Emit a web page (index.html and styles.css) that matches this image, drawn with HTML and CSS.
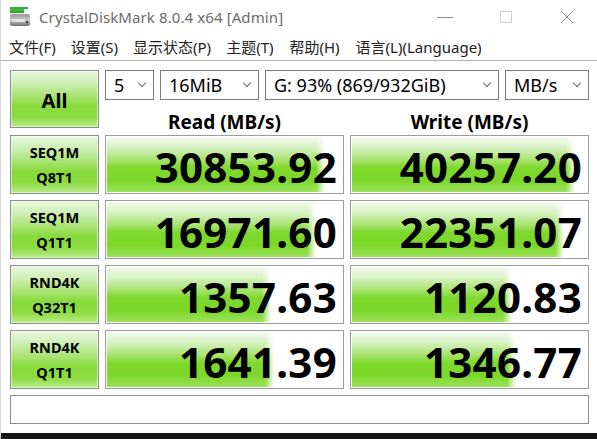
FILE: index.html
```html
<!DOCTYPE HTML>
<html>

<head>
  <title>CrystalDiskMark 8.0.4 x64 [Admin]</title>
  <meta name="viewport" content="width=device-width, initial-scale=1">
  <link rel="stylesheet" href="styles.css">
</head>

<body>
  <div class="window">
    <header class="titlebar">
      <svg class="app-icon" width="22" height="22" viewBox="0 0 22 22">
        <defs>
          <linearGradient id="ig" x1="0" y1="0" x2="0" y2="1">
            <stop offset="0" stop-color="#6fd84a" />
            <stop offset="1" stop-color="#1f9a2a" />
          </linearGradient>
          <linearGradient id="db" x1="0" y1="0" x2="0" y2="1">
            <stop offset="0" stop-color="#9a9a9a" />
            <stop offset="0.5" stop-color="#c9c9c9" />
            <stop offset="1" stop-color="#6c6c6c" />
          </linearGradient>
        </defs>
        <rect x="1" y="0" width="14" height="6" fill="url(#ig)" />
        <rect x="1" y="0" width="18" height="2" fill="#2fb23a" />
        <rect x="1" y="7" width="20" height="12" rx="2" fill="url(#db)" />
        <rect x="3" y="12" width="13" height="3" fill="#e2e2e2" />
        <rect x="17" y="14" width="2" height="2" fill="#3d3d3d" />
      </svg>
      <span class="title">CrystalDiskMark 8.0.4 x64 [Admin]</span>
      <div class="controls">
        <span class="ctl"><svg width="18" height="10" viewBox="0 0 18 10"><line x1="1" y1="5.5" x2="17" y2="5.5" stroke="#8a8a8a" stroke-width="1" /></svg></span>
        <span class="ctl"><svg width="14" height="14" viewBox="0 0 14 14"><rect x="1.5" y="1.5" width="11" height="11" fill="none" stroke="#d2d2d2" stroke-width="1" /></svg></span>
        <span class="ctl"><svg width="14" height="14" viewBox="0 0 14 14"><path d="M1 1 L13 13 M13 1 L1 13" stroke="#8a8a8a" stroke-width="1" /></svg></span>
      </div>
    </header>

    <nav class="menubar">
      <span>文件(F)</span>
      <span>设置(S)</span>
      <span>显示状态(P)</span>
      <span>主题(T)</span>
      <span>帮助(H)</span>
      <span>语言(L)(Language)</span>
    </nav>

    <main class="panel">
      <div class="grid">
        <div class="btn all">All</div>

        <div class="selects">
          <div class="select s-count">5<i class="chev"></i></div>
          <div class="select s-size">16MiB<i class="chev"></i></div>
          <div class="select s-drive">G: 93% (869/932GiB)<i class="chev"></i></div>
          <div class="select s-unit">MB/s<i class="chev"></i></div>
        </div>

        <div class="head">Read (MB/s)</div>
        <div class="head">Write (MB/s)</div>

        <div class="btn label">SEQ1M<br>Q8T1</div>
        <div class="value" style="--w:218px">30853.92</div>
        <div class="value" style="--w:223px">40257.20</div>

        <div class="btn label">SEQ1M<br>Q1T1</div>
        <div class="value" style="--w:209px">16971.60</div>
        <div class="value" style="--w:212px">22351.07</div>

        <div class="btn label">RND4K<br>Q32T1</div>
        <div class="value" style="--w:164px">1357.63</div>
        <div class="value" style="--w:160px">1120.83</div>

        <div class="btn label">RND4K<br>Q1T1</div>
        <div class="value" style="--w:167px">1641.39</div>
        <div class="value" style="--w:164px">1346.77</div>

        <div class="status"></div>
      </div>
    </main>

    <div class="taskbar"></div>
  </div>
</body>

</html>
```

FILE: styles.css
```css
* {
  box-sizing: border-box;
}

body {
  margin: 0;
  background: #ffffff;
  font-family: "Noto Sans", "Noto Sans CJK SC", sans-serif;
  color: #000;
}

.window {
  width: 597px;
  height: 439px;
  display: flex;
  flex-direction: column;
  overflow: hidden;
  border-left: 1px solid #d6d6d6;
}

.titlebar {
  height: 34px;
  display: flex;
  align-items: center;
  padding-left: 8px;
}

.app-icon {
  margin-top: 1px;
  margin-right: 8px;
}

.title {
  font-size: 15px;
  color: #6b6b6b;
  letter-spacing: 0.1px;
}

.controls {
  margin-left: auto;
  display: flex;
  height: 100%;
}

.ctl {
  width: 61px;
  display: flex;
  align-items: center;
  justify-content: center;
}

.menubar {
  height: 27px;
  display: flex;
  align-items: center;
  gap: 15px;
  padding-left: 8px;
  padding-bottom: 1px;
  font-size: 15px;
  color: #222;
  border-bottom: 1px solid #b4b4b4;
}

.menubar span:nth-child(n+5) {
  margin-left: 1px;
}

.panel {
  flex: 1;
  padding: 9px 0 0 9px;
}

.grid {
  display: grid;
  grid-template-columns: 89px 239px 239px;
  grid-template-rows: 30px 23px repeat(4, 59px) 29px;
  column-gap: 6px;
  row-gap: 6px;
}

.btn {
  border: 1px solid #8c8c8c;
  background: linear-gradient(to bottom, #e9f7df 0%, #cdeeb4 22%, #a3e26a 48%, #88da3c 62%, #8ddc42 82%, #b9ec8c 100%);
  display: flex;
  align-items: center;
  justify-content: center;
  text-align: center;
  font-weight: bold;
  box-shadow: inset 0 0 0 1px rgba(255, 255, 255, 0.55);
}

.all {
  grid-row: 1 / 3;
  font-size: 20px;
  margin-bottom: 1px;
  padding-top: 2px;
}

.label {
  font-size: 14.5px;
  line-height: 25px;
}

.selects {
  grid-column: 2 / 4;
  display: flex;
  gap: 6px;
}

.select {
  border: 1px solid #7a7a7a;
  background: #fff;
  font-size: 18px;
  display: flex;
  align-items: center;
  padding-left: 8px;
  padding-bottom: 1px;
}

.s-count { width: 49px; }
.s-size { width: 99px; }
.s-drive { width: 234px; }
.s-unit { width: 84px; }

.chev {
  margin-left: auto;
  margin-right: 8px;
  width: 6px;
  height: 6px;
  border-right: 1px solid #6a6a6a;
  border-bottom: 1px solid #6a6a6a;
  transform: rotate(45deg);
  margin-top: -4px;
}

.head {
  font-size: 19px;
  font-weight: bold;
  text-align: center;
  line-height: 23px;
  padding-top: 5px;
}

.value {
  border: 1px solid #9c9c9c;
  background-color: #fff;
  background-image:
    linear-gradient(to right, rgba(255, 255, 255, 0) calc(100% - 9px), #fff),
    linear-gradient(to bottom, #f4faf0 0%, #d5f1c0 20%, #a7e36e 42%, #7fd82c 56%, #7dd72a 80%, #9be25c 100%);
  background-repeat: no-repeat;
  background-position: 1px 1px;
  background-size: var(--w) calc(100% - 2px);
  display: flex;
  align-items: center;
  justify-content: flex-end;
  padding: 3px 6px 0 0;
  font-size: 42px;
  font-weight: bold;
  letter-spacing: 0.3px;
}

.status {
  grid-column: 1 / 4;
  border: 1px solid #8c8c8c;
  background: #fff;
}

.taskbar {
  margin-top: auto;
  height: 6px;
  background: #151515;
}
```
